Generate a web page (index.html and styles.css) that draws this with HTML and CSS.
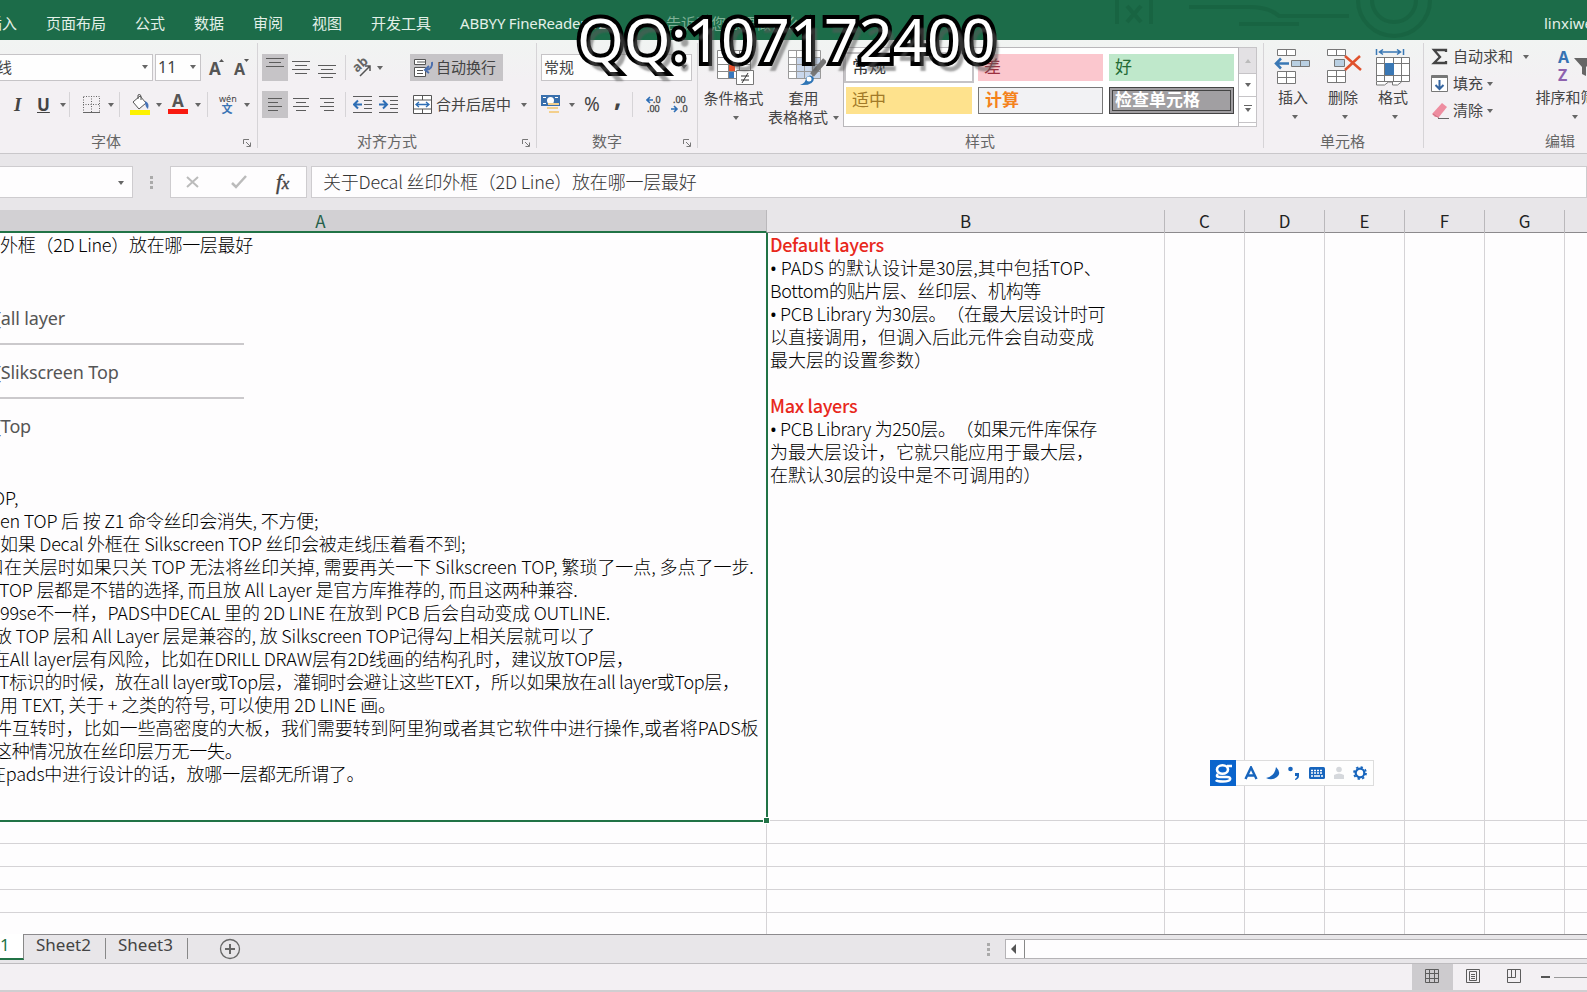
FILE: index.html
```
<!DOCTYPE html>
<html lang="zh-CN">
<head>
    <meta charset="UTF-8">
    <title>Excel</title>
    <link rel="stylesheet" href="styles.css">
</head>
<body>
    <div class="window">
        <nav class="tabs">
            <span class="tab">插入</span>
            <span class="tab">页面布局</span>
            <span class="tab">公式</span>
            <span class="tab">数据</span>
            <span class="tab">审阅</span>
            <span class="tab">视图</span>
            <span class="tab">开发工具</span>
            <span class="tab abbyy">ABBYY FineReader 12</span>
            <span class="tab tell">告诉我您想要做什么</span>
            <svg class="deco" width="360" height="40" fill="none" stroke="#175f3e" stroke-width="4">
                <path d="M8 0v24M18 6l14 16M32 6L18 22M42 0v24M80 7h60q20 0 30 9h70M130 24h60"/>
                <circle cx="285" cy="0" r="22"/><circle cx="285" cy="0" r="36"/>
            </svg>
            <span class="tab user">linxiwe</span>
        </nav>

        <section class="ribbon">
            <div class="group g-font">
                <div class="row font-row1">
                    <div class="box">线<i class="caret"></i></div>
                    <div class="box num">11<i class="caret"></i></div>
                    <svg width="18" height="20"><text x="1" y="17" class="ic-a">A</text><path d="M11 4l2.500-3 2.500 3z" fill="#555"/></svg>
                    <svg width="18" height="20"><text x="1" y="17" class="ic-a small">A</text><path d="M11 1h5l-2.500 3z" fill="#555"/></svg>
                </div>
                <div class="row font-row2">
                    <b class="italic">I</b>
                    <b class="under">U</b>
                    <i class="caret"></i>
                    <i class="sep"></i>
                    <svg width="18" height="18" fill="none" stroke="#666" stroke-dasharray="1 1.500"><path d="M.5.5h16v16H.5zM8.500 0v17M0 8.500h17"/><path d="M0 16.500h17" stroke-dasharray="none"/></svg>
                    <i class="caret"></i>
                    <i class="sep"></i>
                    <svg width="20" height="21"><path d="M3 8l7-6 6 7-7 6z" fill="#fff" stroke="#555"/><path d="M8 5V1q2-2 3 1v4" fill="none" stroke="#555"/><path d="M15 7q5 2 3 8-3-2-3-8z" fill="#4472b8"/><path d="M0 16h20v5H0z" fill="#fdf200"/></svg>
                    <i class="caret"></i>
                    <svg width="20" height="21"><text x="4" y="13" class="ic-a big">A</text><path d="M0 15h20v5H0z" fill="#f81a10"/></svg>
                    <i class="caret"></i>
                    <i class="sep"></i>
                    <span class="wen">wén<em>文</em></span>
                    <i class="caret"></i>
                </div>
                <div class="label"><span>字体</span><svg class="launch" width="8" height="8"><use href="#launch"/></svg></div>
            </div>

            <div class="group g-align">
                <div class="row align-row1">
                    <span class="on"><svg width="18" height="18" class="ln"><path d="M0 .5h18M3 4.500h12M0 8.500h18" /></svg></span>
                    <svg width="18" height="13" class="ln"><path d="M0 .5h18M3 4.500h12M0 8.500h18M3 12.500h12"/></svg>
                    <svg width="18" height="13" class="ln low"><path d="M0 .5h18M3 4.500h12M0 8.500h18M3 12.500h12"/></svg>
                    <i class="sep"></i>
                    <svg width="21" height="20"><text transform="translate(5 15) rotate(-42)" class="ab">ab</text><path d="M8 18L18 8m0 5V8h-5" fill="none" stroke="#555" stroke-width="1.500"/></svg>
                    <i class="caret"></i>
                    <span class="wrap">
                        <svg width="20" height="20" fill="none" stroke="#555"><path d="M.5 1.500h11v5H.5zM.5 9.500h11v9H.5zM3 12.500h6M3 15.500h6M3 4h9" fill="#fff"/><path d="M18 4q1 7-6 8m3-4l-4 4 4 3" stroke="#4b6fae" stroke-width="2"/></svg>
                        <span>自动换行</span></span>
                </div>
                <div class="row align-row2">
                    <span class="on mid"><svg width="16" height="13" class="ln"><path d="M0 .5h14M0 4.500h10M0 8.500h14M0 12.500h10"/></svg></span>
                    <svg width="16" height="13" class="ln"><path d="M0 .5h16M3 4.500h10M0 8.500h16M3 12.500h10"/></svg>
                    <svg width="14" height="13" class="ln"><path d="M0 .5h14M4 4.500h10M0 8.500h14M4 12.500h10"/></svg>
                    <i class="sep"></i>
                    <svg width="19" height="17" class="ln"><path d="M0 .5h19M11 4.500h8M11 8.500h8M11 12.500h8M0 16.500h19"/><path d="M9 8.500H2M5 4.500l-4 4 4 4" class="blue"/></svg>
                    <svg width="19" height="17" class="ln"><path d="M0 .5h19M11 4.500h8M11 8.500h8M11 12.500h8M0 16.500h19"/><path d="M0 8.500h7M4 4.500l4 4-4 4" class="blue"/></svg>
                    <svg width="20" height="20" fill="#fff" stroke="#555"><path d="M.5.5h18v18H.5zM.5 5h18M.5 14h18M9.500.5V5M9.500 14v4.500"/><path d="M3 9.500h13M6 7L3 9.500 6 12M13 7l3 2.500-3 2.500" fill="none" stroke="#2e6eb5" stroke-width="1.300"/></svg>
                    <span>合并后居中</span>
                    <i class="caret"></i>
                </div>
                <div class="label"><span>对齐方式</span><svg class="launch" width="8" height="8"><use href="#launch"/></svg></div>
            </div>

            <div class="group g-num">
                <div class="row"><div class="box fmt">常规<i class="caret"></i></div></div>
                <div class="row num-row2">
                    <svg width="20" height="19"><path d="M0 0h19v11H0z" fill="#3a70ad"/><circle cx="9.500" cy="5.500" r="3.500" fill="#fff"/><path d="M2 2h3v1H2zM14 2h3v1h-3zM2 8h3v1H2z" fill="#fff"/><path d="M7 8h11v2H7zM6 12h11v2H6zM8 16h10v2H8z" fill="#f3cf8c"/></svg>
                    <i class="caret"></i>
                    <span class="pct">%</span>
                    <b class="comma">,</b>
                    <i class="sep"></i>
                    <svg width="18" height="19" class="dec"><path d="M7 5H1m3-3L1 5l3 3" class="blue"/><text x="7" y="8">.0</text><text x="1" y="17">.00</text></svg>
                    <svg width="18" height="19" class="dec"><text x="2" y="8">.00</text><text x="9" y="17">.0</text><path d="M0 14h6M3 11l3 3-3 3" class="blue"/></svg>
                </div>
                <div class="label"><span>数字</span><svg class="launch" width="8" height="8"><use href="#launch"/></svg></div>
            </div>

            <div class="group g-style">
                <div class="style-main">
                    <div class="tall">
                        <svg width="38" height="38"><path d="M.5.5h33v28H.5zM.5 7.500h33M.5 14.500h33M.5 21.500h33M11.500.5v28M22.500.5v28" fill="#fff" stroke="#888"/><path d="M12 15h6v6h-6z" fill="#e8502c"/><path d="M12 22h5v6h-5z" fill="#3a78bd"/><path d="M19.500 20.500h17v14h-17z" fill="#fff" stroke="#777"/><path d="M24 26h8M24 30h8M31 23l-6 10" stroke="#333"/></svg>
                        <span>条件格式</span><i class="caret"></i>
                    </div>
                    <div class="tall">
                        <svg width="38" height="38"><path d="M.5.5h32v28H.5z" fill="#fff"/><path d="M9 8h23v20H9z" fill="#c9d7ec"/><path d="M.5.5h32v28H.5zM.5 7.500h32M.5 14.500h32M.5 21.500h32M8.500.5v28M16.500.5v28M24.500.5v28" fill="none" stroke="#999"/><path d="M37 10L24 25" stroke="#777" stroke-width="5"/><path d="M12 35q6-2 6-7 4-5 8 0 0 8-14 7z" fill="#2e75b6"/><circle cx="21" cy="29" r="2.500" fill="#fff"/></svg>
                        <span>套用</span><span class="two">表格格式<i class="caret"></i></span>
                    </div>
                    <div class="gallery">
                        <span class="sw normal">常规</span><span class="sw bad">差</span><span class="sw good">好</span>
                        <span class="sw neutral">适中</span><span class="sw calc">计算</span><span class="sw check">检查单元格</span>
                    </div>
                    <div class="scroller"><span class="off"><i class="caret up"></i></span><span><i class="caret"></i></span><span class="more"><i class="caret"></i></span></div>
                </div>
                <div class="label"><span>样式</span></div>
            </div>

            <div class="group g-cells">
                <div class="cells-main">
                    <div class="tall">
                        <svg width="38" height="36" fill="#fff" stroke="#777"><path d="M3.500.5h18v6h-18zM12.500.5v6M3.500 22.500h18v12h-18zM12.500 22.500v12M3.500 28.500h18"/><path d="M17.500 11.500h18v6h-18zM26.500 11.500v6" fill="#b9cfe2"/><path d="M15 14.500H2M7 9.500l-5 5 5 5" fill="none" stroke="#3a78b5" stroke-width="2.500"/></svg>
                        <span>插入</span><i class="caret"></i>
                    </div>
                    <div class="tall">
                        <svg width="38" height="36" fill="#fff" stroke="#777"><path d="M3.500.5h18v6h-18zM12.500.5v6M3.500 21.500h18v12h-18zM12.500 21.500v12M3.500 27.500h18"/><path d="M10.500 10.500h10v7h-10z" fill="#b9cfe2"/><path d="M21 7l16 14M36 7L21 21" stroke="#e0522d" stroke-width="2.500"/></svg>
                        <span>删除</span><i class="caret"></i>
                    </div>
                    <div class="tall">
                        <svg width="38" height="38" fill="#fff" stroke="#777"><path d="M2.500 8.500h33v24h-33zM2.500 14.500h33M2.500 26.500h33M10.500 8.500v24M19.500 8.500v24M27.500 8.500v24M2.500 33v3h8l4-3h4v3h5l4-3"/><path d="M11 14h9v12h-9z" fill="#3a78b5" stroke="none"/><path d="M2.500 0v6M29.500 0v6M6 3h20M9 .5L5.500 3 9 5.500M23 .5L26.500 3 23 5.500" fill="none" stroke="#3a78b5" stroke-width="1.500"/></svg>
                        <span>格式</span><i class="caret"></i>
                    </div>
                </div>
                <div class="label"><span>单元格</span></div>
            </div>

            <div class="group g-edit">
                <div class="edit-main">
                    <div class="edit-list">
                        <div><svg width="18" height="18"><path d="M15 4V2H3l6 7-6 6h12v-2" fill="none" stroke="#444" stroke-width="2.300"/></svg><span>自动求和</span><i class="caret far"></i></div>
                        <div><svg width="18" height="18"><path d="M.5.500h16v16H.5z" fill="#fff" stroke="#777"/><path d="M.5 2h16" stroke="#777" stroke-width="2"/><path d="M8.500 5v9M4.500 10l4 4 4-4" fill="none" stroke="#3565a0" stroke-width="2"/></svg><span>填充</span><i class="caret"></i></div>
                        <div><svg width="19" height="18"><path d="M1 12L11 1l5 4-8 10H4z" fill="#ee8da0"/><path d="M2 12l6 4" stroke="#c97080"/><path d="M7 16.500h11" stroke="#666"/></svg><span>清除</span><i class="caret"></i></div>
                    </div>
                    <div class="tall sort">
                        <svg width="50" height="36"><text x="1" y="14" class="az a">A</text><text x="1" y="32" class="az z">Z</text><path d="M17 9h20l-8 9v9l-4-2v-7z" fill="#666"/></svg>
                        <span>排序和筛选</span><i class="caret"></i>
                    </div>
                </div>
                <div class="label"><span>编辑</span></div>
            </div>
        </section>

        <section class="formula">
            <div class="namebox"><i class="caret"></i></div>
            <i class="dots"></i>
            <div class="fx">
                <svg width="14" height="14" stroke="#bbb" stroke-width="2"><path d="M1 2l11 10M12 2L1 12"/></svg>
                <svg width="17" height="14" stroke="#bbb" stroke-width="2.500" fill="none"><path d="M1 8l4 4L15 1"/></svg>
                <span class="fn">f<small>x</small></span>
            </div>
            <div class="input">关于Decal 丝印外框（2D Line）放在哪一层最好</div>
        </section>

        <section class="sheet">
            <div class="heads">
                <span class="sel">A</span><span>B</span><span>C</span><span>D</span><span>E</span><span>F</span><span>G</span><span></span>
            </div>
            <div class="cells first">
                <div class="cell a">
                    <p class="title">外框（2D Line）放在哪一层最好</p>
                    <div class="picture">
                        <p><i>[</i>all layer</p>
                        <p><i>[</i>Slikscreen Top</p>
                        <p><i>[</i>Top</p>
                    </div>
                    <p class="l1">OP,</p>
                    <p class="l2">en TOP 后 按 Z1 命令丝印会消失, 不方便;</p>
                    <p class="l3">如果 Decal 外框在 Silkscreen TOP 丝印会被走线压着看不到;</p>
                    <p class="l4">口在关层时如果只关 TOP 无法将丝印关掉, 需要再关一下 Silkscreen TOP, 繁琐了一点, 多点了一步.</p>
                    <p class="l5">TOP 层都是不错的选择, 而且放 All Layer 是官方库推荐的, 而且这两种兼容.</p>
                    <p class="l6">99se不一样，PADS中DECAL 里的 2D LINE 在放到 PCB 后会自动变成 OUTLINE.</p>
                    <p class="l7">放 TOP 层和 All Layer 层是兼容的, 放 Silkscreen TOP记得勾上相关层就可以了</p>
                    <p class="l8">在All layer层有风险，比如在DRILL DRAW层有2D线画的结构孔时，建议放TOP层，</p>
                    <p class="l9">T标识的时候，放在all layer或Top层，灌铜时会避让这些TEXT，所以如果放在all layer或Top层，</p>
                    <p class="l10">用 TEXT, 关于 + 之类的符号, 可以使用 2D LINE 画。</p>
                    <p class="l11">件互转时，比如一些高密度的大板，我们需要转到阿里狗或者其它软件中进行操作,或者将PADS板</p>
                    <p class="l12">这种情况放在丝印层万无一失。</p>
                    <p class="l13">在pads中进行设计的话，放哪一层都无所谓了。</p>
                </div>
                <div class="cell b">
                    <p class="red">Default layers</p>
                    <p><i>•</i> PADS 的默认设计是30层,其中包括TOP、</p>
                    <p class="tight">Bottom的贴片层、丝印层、机构等</p>
                    <p class="tight"><i>•</i> PCB Library 为30层。（在最大层设计时可</p>
                    <p>以直接调用，但调入后此元件会自动变成</p>
                    <p>最大层的设置参数）</p>
                    <p>&nbsp;</p>
                    <p class="red">Max layers</p>
                    <p class="tight"><i>•</i> PCB Library 为250层。（如果元件库保存</p>
                    <p>为最大层设计，它就只能应用于最大层，</p>
                    <p>在默认30层的设中是不可调用的）</p>
                </div>
                <div class="cell"></div><div class="cell"></div><div class="cell"></div><div class="cell"></div><div class="cell"></div><div class="cell"></div>
            </div>
            <div class="cells"><div class="cell"></div><div class="cell"></div><div class="cell"></div><div class="cell"></div><div class="cell"></div><div class="cell"></div><div class="cell"></div><div class="cell"></div></div>
            <div class="cells"><div class="cell"></div><div class="cell"></div><div class="cell"></div><div class="cell"></div><div class="cell"></div><div class="cell"></div><div class="cell"></div><div class="cell"></div></div>
            <div class="cells"><div class="cell"></div><div class="cell"></div><div class="cell"></div><div class="cell"></div><div class="cell"></div><div class="cell"></div><div class="cell"></div><div class="cell"></div></div>
            <div class="cells"><div class="cell"></div><div class="cell"></div><div class="cell"></div><div class="cell"></div><div class="cell"></div><div class="cell"></div><div class="cell"></div><div class="cell"></div></div>
            <div class="cells"><div class="cell"></div><div class="cell"></div><div class="cell"></div><div class="cell"></div><div class="cell"></div><div class="cell"></div><div class="cell"></div><div class="cell"></div></div>
        </section>

        <footer class="sheets">
            <span class="st active">1</span>
            <span class="st">Sheet2</span>
            <span class="st">Sheet3</span>
            <svg class="add" width="22" height="22" fill="none" stroke="#666"><circle cx="11" cy="11" r="9.500" stroke-width="1.300"/><path d="M6 11h10M11 6v10" stroke-width="2"/></svg>
            <i class="dots"></i>
            <div class="hscroll"><span><svg width="6" height="10"><path d="M5 0v10L0 5z" fill="#555"/></svg></span></div>
        </footer>
        <footer class="status">
            <span class="view on"><svg width="14" height="14" class="ln"><path d="M.5.5h13v13H.5zM.5 4.500h13M.5 9.500h13M4.500.5v13M9.500.5v13"/></svg></span>
            <span class="view"><svg width="14" height="14" class="ln"><path d="M.5.5h13v13H.5zM3.500 2.500h7v9h-7zM5 5.500h4M5 7.500h4M5 9.500h4"/></svg></span>
            <span class="view"><svg width="14" height="14" class="ln"><path d="M.5.5h13v13H.5zM.5 8.500h8v-8M4.500.5v8"/></svg></span>
            <i class="minus"></i><i class="zoomline"></i>
        </footer>

        <div class="ime">
            <svg width="26" height="26"><path d="M0 0h26v26H0z" fill="#0a64cc"/><g fill="none" stroke="#fff" stroke-width="2.600"><ellipse cx="12.500" cy="9.500" rx="5.500" ry="4.300"/><path d="M17 6h5M8 14q-3 3 2 3h7q4 0 3 2.500-1 2-7 2-6 0-7-1.500"/></g></svg>
            <svg width="14" height="14" fill="none" stroke="#1765bd" stroke-width="2.400"><path d="M1.500 13L7 1.500 12.500 13M3.500 9.500h7"/></svg>
            <svg width="14" height="14"><path d="M10 1q6 6 1 10-5 4-11 1 9-2 10-11z" fill="#1765bd"/></svg>
            <svg width="14" height="14" fill="#1765bd"><circle cx="3.500" cy="3" r="2.300"/><path d="M8 7h4v3q0 3-4 4v-1q2-1 2-3H8z"/></svg>
            <svg width="16" height="13"><rect width="16" height="12" rx="1.500" fill="#1765bd"/><path d="M2 3.500h12M2 6h12" stroke="#fff" stroke-width="1.300" stroke-dasharray="2 1"/><path d="M2 9h2M5 9h6M12 9h2" stroke="#fff" stroke-width="1.300"/></svg>
            <svg width="12" height="14" fill="#d5d8dc"><circle cx="6" cy="3.500" r="2.800"/><path d="M1 13V9q5-3 10 0v4z"/></svg>
            <svg width="14" height="14" fill="none" stroke="#1765bd"><circle cx="7" cy="7" r="4.300" stroke-width="2.200"/><circle cx="7" cy="7" r="6" stroke-width="1.800" stroke-dasharray="2.300 2.400"/></svg>
        </div>
        <div class="mark">QQ:107172400</div>
    </div>

    <svg width="0" height="0"><symbol id="launch" viewBox="0 0 8 8"><path d="M.5 5V.5H6M3 3l4 4M7.500 3.500v4h-4" fill="none" stroke="#777"/></symbol></svg>
</body>
</html>
```
FILE: styles.css
```
* {
    box-sizing: border-box;
}
body {
    margin: 0;
    overflow: hidden;
    font-family: "Noto Sans", "Noto Sans CJK SC", sans-serif;
    font-size: 15px;
    color: #444;
}
p {
    margin: 0;
}
svg {
    display: block;
    flex: none;
}
.window {
    position: relative;
    width: 1587px;
    height: 992px;
    overflow: hidden;
    display: flex;
    flex-direction: column;
    background: #fefdfe;
}

/* tabs */
.tabs {
    height: 40px;
    flex: none;
    display: flex;
    align-items: center;
    gap: 29px;
    padding: 7px 0 0;
    margin: 0;
    background: #1c6c49;
    color: #e3f0e8;
    white-space: nowrap;
}
.tab {
    line-height: 33px;
    flex: none;
}
.tab:first-child {
    margin-left: -13px;
}
.abbyy {
    width: 150px;
    letter-spacing: -0.2px;
}
.tell {
    margin-left: 27px;
    width: 250px;
    color: #7fb197;
}
.deco {
    margin: -7px 0 0 164px;
    opacity: 0.6;
}
.user {
    position: absolute;
    left: 1544px;
}

/* ribbon */
.ribbon {
    height: 114px;
    flex: none;
    display: flex;
    background: linear-gradient(#f1f4f2, #f3f0f3 40px);
    border-bottom: 1px solid #c9c7ca;
}
.group {
    flex: none;
    height: 105px;
    margin-top: 3px;
    padding-top: 11px;
    border-right: 1px solid #d6d4d7;
    white-space: nowrap;
}
.g-font { width: 258px; }
.g-align { width: 279px; padding-left: 4px; }
.g-num { width: 161px; padding-left: 4px; }
.g-style { width: 566px; padding-top: 4px; }
.g-cells { width: 160px; padding-top: 6px; }
.g-edit { width: 163px; padding-top: 0; border: 0; overflow: hidden; }
.row {
    display: grid;
    align-items: center;
    height: 27px;
    margin-bottom: 10px;
}
.row > .caret {
    justify-self: center;
}
.row > span:not(.on):not(.wrap) {
    margin-top: -2px;
}
.font-row1 { grid-template-columns: 153px 2px 46px 7px 25px 25px; }
.font-row1 > :nth-child(2) { grid-column: 3; }
.font-row1 > :nth-child(3) { grid-column: 5; }
.font-row2 { grid-template-columns: 32px 24px 13px 14px 20px 16px 11px 20px 18px 21px 18px 12px 16px 23px; }
.align-row1 { grid-template-columns: 30px 26px 27px 7px 21px 13px auto; }
.align-row2 { grid-template-columns: 31px 27px 25px 8px 26px 34px 23px 81px 14px; }
.num-row2 { grid-template-columns: 22px 18px 29px 22px 14px 25px 18px; }
.box {
    display: flex;
    align-items: center;
    justify-content: space-between;
    height: 27px;
    padding: 0 4px 1px 0;
    line-height: 22px;
    background: #fefefe;
    border: 1px solid #c6c4c7;
}
.box:first-child {
    border-left: 0;
    padding-left: 0;
    text-indent: -3px;
}
.box.num {
    padding-left: 2px;
    font-size: 16px;
}
.box.fmt {
    width: 151px;
    border: 1px solid #c6c4c7;
    text-indent: 2px;
}
.caret {
    width: 0;
    height: 0;
    border: 3.5px solid transparent;
    border-top: 4px solid #666;
    border-bottom: 0;
    flex: none;
}
.caret.up {
    border-top: 0;
    border-bottom: 4px solid #bbb;
}
.sep {
    width: 1px;
    height: 25px;
    background: #d6d4d7;
}
.ic-a {
    font: bold 17px "Noto Sans", sans-serif;
    fill: #555;
}
.ic-a.small { font-size: 16px; }
.ic-a.big { font-size: 17px; }
.italic {
    padding-left: 14px;
    font: italic bold 19px "Liberation Serif", serif;
}
.under {
    padding-left: 5px;
    font-size: 17px;
    text-decoration: underline;
}
.wen {
    font-size: 9px;
    line-height: 9px;
    text-align: center;
}
.wen em {
    display: block;
    font: bold 11px/11px "Noto Sans CJK SC", sans-serif;
    color: #3a74b5;
}
.on {
    width: 26px;
    height: 27px;
    padding: 4px;
    background: #c6c4c7;
}
.on.mid { padding: 7px 6px; }
.ln {
    fill: none;
    stroke: #5c5c5c;
}
.low {
    margin-top: 7px;
}
.blue {
    fill: none;
    stroke: #2e6eb5;
    stroke-width: 2;
}
.ab {
    font: bold 13px "Noto Sans", sans-serif;
    fill: #666;
}
.wrap {
    display: flex;
    align-items: center;
    gap: 3px;
    width: 93px;
    height: 27px;
    padding-left: 4px;
    margin-left: 24px;
    background: #c6c4c7;
}
.wrap span { margin: -2px 0 0 -1px; }
.pct { font-size: 19px; padding-left: 3px; }
.comma { font-size: 26px; line-height: 10px; margin: -16px 0 0 4px; }
.dec {
    font: 9px "Noto Sans", sans-serif;
    fill: #444;
}
.dec text { stroke: #444; stroke-width: 0.3; }
.dec .blue { stroke-width: 1.6; }
.label {
    display: grid;
    grid-template-columns: auto 8px;
    align-items: center;
    height: 14px;
    margin-top: 16px;
    line-height: 14px;
    color: #666;
}
.g-font .label { padding: 0 6px 0 91px; }
.g-align .label { padding: 0 6px 0 95px; }
.g-num .label { padding: 0 6px 0 51px; }
.g-style .label { padding-left: 267px; margin-top: 12px; }
.g-cells .label { padding-left: 56px; margin-top: 11px; }
.g-edit .label { padding-left: 121px; margin-top: 12px; }
.launch { margin-top: 4px; }
.tall {
    display: flex;
    flex-direction: column;
    align-items: center;
    line-height: 19px;
}
.tall svg { height: 39px; }
.tall > .caret { margin: 8px -4px 0 0; }
.two {
    display: flex;
    align-items: center;
    gap: 5px;
    margin-right: -10px;
}
.style-main {
    display: grid;
    grid-template-columns: 76px 69px 396px 18px;
    height: 75px;
}
.style-main .tall { padding-top: 3px; }
.style-main .tall:first-child { margin-left: -5px; }
.style-main .tall:nth-child(2) { margin-left: -20px; }
.style-main .tall:nth-child(2) > span:nth-child(2) { margin-left: 10px; }
.style-main .tall:first-child svg { margin-left: 4px; }
.style-main .tall:nth-child(2) svg { margin-left: 16px; }
.gallery {
    display: grid;
    grid-template-columns: 126px 125px 125px;
    grid-template-rows: 27px 27px;
    gap: 6px;
    padding: 6px 2px;
    background: #fff;
    border: 1px solid #b9b7ba;
}
.sw {
    padding-left: 6px;
    font-size: 17px;
    line-height: 26px;
}
.normal { color: #333; box-shadow: 0 0 0 2px #c5c3c6; }
.bad { background: #fbc7ce; color: #9c3040; }
.good { background: #bfe8cb; color: #236b35; }
.neutral { background: #fee28d; color: #a27a28; }
.calc { background: #f2f2f4; color: #f4821c; font-weight: bold; border: 1px solid #777; line-height: 24px; }
.check { background: #a19fa2; color: #fff; font-weight: bold; border: 4px double #444; line-height: 18px; padding-left: 2px; }
.scroller {
    display: grid;
    grid-template-rows: 26px 23px 26px;
    border: 1px solid #c6c4c7;
    border-left: 0;
    background: #fff;
}
.scroller span {
    display: grid;
    place-items: center;
    border-bottom: 1px solid #c6c4c7;
}
.scroller .off { background: #e3e1e4; }
.more .caret { position: relative; }
.more .caret::before {
    content: "";
    position: absolute;
    left: -4px;
    top: -7px;
    width: 8px;
    height: 1px;
    background: #666;
}
.cells-main {
    display: grid;
    grid-template-columns: 50px 50px 50px;
    padding-left: 4px;
    height: 74px;
}
.edit-main {
    display: flex;
    height: 79px;
}
.edit-list {
    width: 112px;
    flex: none;
    padding-left: 7px;
}
.edit-list div {
    display: flex;
    align-items: center;
    height: 27px;
}
.edit-list span { margin-top: -2px; }
.edit-list svg { width: 20px; margin-right: 2px; }
.edit-list .caret { margin-left: 4px; }
.edit-list .far { margin-left: 10px; }
.edit-list + .sort { padding-top: 6px; }
.sort { flex: none; width: 74px; }
.sort svg { margin-left: 17px; }
.az { font: bold 16px "Noto Sans", sans-serif; }
.az.a { fill: #3672b3; }
.az.z { fill: #8e62ae; }

/* formula bar */
.formula {
    height: 56px;
    flex: none;
    display: flex;
    padding-top: 12px;
    background: #e8e6e9;
}
.formula > div {
    height: 32px;
    background: #fefdfe;
    border: 1px solid #cecccf;
}
.formula .namebox {
    width: 133px;
    padding: 14px 8px 0 0;
    border-left: 0;
}
.namebox .caret {
    display: block;
    margin-left: auto;
}
.dots {
    width: 3px;
    height: 13px;
    background: repeating-linear-gradient(#aaa 0 3px, transparent 3px 5px);
}
.formula .dots { margin: 10px 17px 0 17px; }
.formula .fx {
    width: 137px;
    display: flex;
    align-items: center;
    padding-left: 15px;
}
.fx svg:nth-child(2) { margin-left: 31px; }
.fn {
    margin-left: 28px;
    font: italic 21px "Liberation Serif", serif;
    -webkit-text-stroke: 0.4px #444;
}
.fn small { font-size: 17px; }
.formula .input {
    margin-left: 4px;
    flex: 1;
    padding-left: 11px;
    font: 300 18px/28px "Noto Sans CJK SC", sans-serif;
    letter-spacing: -0.2px;
    color: #333;
}

/* grid */
.sheet {
    height: 724px;
    flex: none;
    overflow: hidden;
}
.heads, .cells {
    display: grid;
    grid-template-columns: 767px 398px repeat(6, 80px);
}
.heads {
    height: 23px;
    background: #e8e6e9;
    border-bottom: 1px solid #8c8a8d;
    font: 17px/21px "Noto Sans CJK SC", sans-serif;
    color: #222;
    text-align: center;
}
.heads span { border-right: 1px solid #bab8bb; }
.heads .sel {
    background: #d2d0d3;
    color: #26604a;
    padding-right: 125px;
    border-bottom: 2px solid #217346;
}
.cells { height: 23px; }
.cell {
    border-right: 1px solid #d5d3d6;
    border-bottom: 1px solid #d5d3d6;
}
.first { height: 588px; }
.first .cell {
    font: 300 18px/23px "Noto Sans CJK SC", sans-serif;
    color: #000;
    white-space: nowrap;
    text-spacing-trim: space-all;
}
.first .a {
    position: relative;
    margin: 0 -1px -1px 0;
    border-right: 2px solid #217346;
    border-bottom: 2px solid #217346;
}
.a::after {
    content: "";
    position: absolute;
    right: -4px;
    bottom: -4px;
    width: 5px;
    height: 5px;
    background: #217346;
    border: 1px solid #fff;
    box-sizing: content-box;
}
.b {
    padding: 0 0 0 3px;
}
.b p {
    height: 23px;
}
.b i {
    font: 18px/18px "Noto Sans", sans-serif;
}
.b .red {
    color: #e8281c;
    font-weight: 500;
    letter-spacing: -0.3px;
}
.tight {
    letter-spacing: -0.33px;
}
.picture {
    width: 244px;
    height: 230px;
    padding-top: 35px;
    font: 18px/54px "Noto Sans", sans-serif;
    letter-spacing: -0.15px;
    color: #555;
}
.picture p {
    height: 54px;
    border-bottom: 2px solid #cbc9cc;
}
.picture p:last-child { border: 0; }
.picture i {
    margin-left: -5px;
    font-style: normal;
}
.title { letter-spacing: -0.28px; }
.l1 { margin-left: -8px; }
.l2 { letter-spacing: -0.2px; }
.l3 { letter-spacing: -0.23px; }
.l4 { margin-left: -14px; letter-spacing: -0.05px; }
.l5 { margin-left: -1px; letter-spacing: -0.16px; }
.l6 { letter-spacing: -0.2px; }
.l7 { margin-left: -6px; letter-spacing: -0.2px; }
.l8 { margin-left: -8px; letter-spacing: -0.2px; }
.l9 { margin-left: -1px; letter-spacing: -0.35px; }
.l10 { letter-spacing: -0.12px; }
.l11 { margin-left: -6px; letter-spacing: -0.07px; }
.l12 { margin-left: -6px; letter-spacing: -0.25px; }
.l13 { margin-left: -12px; letter-spacing: -0.22px; }

/* bottom */
.sheets {
    height: 30px;
    flex: none;
    display: flex;
    background: #e8e6e9;
    border-top: 1px solid #8c8a8d;
    border-bottom: 1px solid #bebcbf;
    font-size: 17px;
    line-height: 14px;
}
.st {
    width: 82px;
    height: 21px;
    margin-top: 3px;
    padding-left: 12px;
    border-right: 1px solid #888;
}
.st.active {
    width: 24px;
    height: 26px;
    margin: -1px 0 0;
    padding: 4px 0 0;
    background: #fff;
    color: #217346;
    border-bottom: 2px solid #217346;
}
.add { margin: 3px 0 0 31px; }
.sheets .dots { margin: 8px 0 0 746px; }
.hscroll {
    flex: 1;
    height: 20px;
    margin: 4px 0 0 15px;
    background: #fefdfe;
    border: 1px solid #b5b3b6;
    border-right: 0;
}
.hscroll span {
    display: grid;
    place-items: center;
    width: 19px;
    height: 18px;
    padding-right: 2px;
    border-right: 1px solid #888;
}
.status {
    height: 28px;
    flex: none;
    display: flex;
    justify-content: flex-end;
    align-items: center;
    background: #f3f0f3;
    border-bottom: 2px solid #d0ced1;
}
.view {
    width: 41px;
    height: 26px;
    padding: 5px 13px;
}
.view.on { background: #cdcbce; }
.minus {
    width: 9px;
    height: 2px;
    margin: 0 4px 0 6px;
    background: #555;
}
.zoomline {
    width: 33px;
    height: 1px;
    background: #999;
}

/* input method bar, floats over the grid */
.ime {
    position: absolute;
    left: 1210px;
    top: 760px;
    width: 164px;
    height: 26px;
    display: flex;
    align-items: center;
    justify-content: space-between;
    padding-right: 6px;
    background: #fefefe;
    border: 1px solid #ddd;
    border-left: 0;
}
.mark {
    position: absolute;
    left: 577px;
    top: -2px;
    font: 60px/82px "Noto Sans", sans-serif;
    color: #fff;
    -webkit-text-stroke: 8px #000;
    paint-order: stroke fill;
    text-shadow: 6px 9px 2px rgba(90, 90, 90, 0.55);
}
```
